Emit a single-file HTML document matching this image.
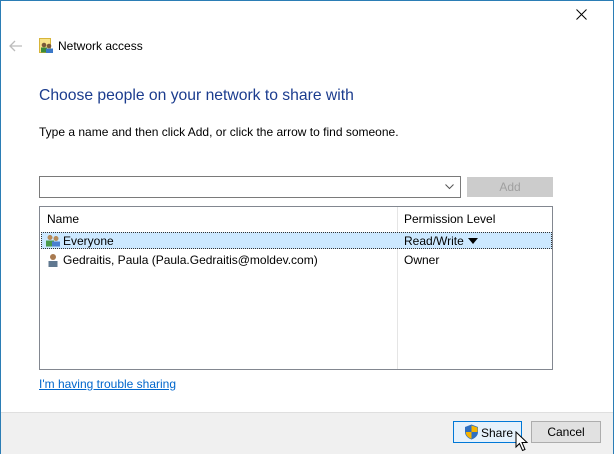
<!DOCTYPE html><html><head><style>
body{margin:0;width:614px;height:454px;overflow:hidden;font-family:"Liberation Sans",sans-serif;font-size:12px;color:#000;background:#fff}
.win{position:absolute;left:0;top:0;width:612px;height:452px;border:1px solid #2b7db5;background:#fff}
.a{position:absolute;white-space:nowrap}
.foot{position:absolute;left:0;top:411px;width:612px;height:41px;background:#f0f0f0;border-top:1px solid #dfdfdf}
.btn{position:absolute;height:20px;border:1px solid #adadad;background:#e1e1e1;text-align:center;line-height:20px;box-sizing:content-box}
</style></head><body><div class="win">
<svg class="a" style="left:575px;top:8px" width="11" height="11"><path d="M0.5 0.5L10.5 10.5M10.5 0.5L0.5 10.5" stroke="#000" stroke-width="1"/></svg>
<svg class="a" style="left:8px;top:39px" width="14" height="12"><path d="M1 6H13M6 1L1 6L6 11" stroke="#bcbcbc" stroke-width="1.3" fill="none"/></svg>
<svg class="a" style="left:38px;top:37px" width="15" height="15"><rect x="0.5" y="0.5" width="11" height="14" fill="#f7e38a" stroke="#d7b53a"/><circle cx="5" cy="7" r="2.3" fill="#7a5a3a"/><rect x="2" y="9.5" width="6" height="5" fill="#3a8a3a"/><circle cx="10" cy="8" r="2.3" fill="#7a5a3a"/><rect x="7" y="10.5" width="7" height="4.5" fill="#3a78c8"/></svg>
<div class="a" style="left:57px;top:38px;font-size:12px">Network access</div>
<div class="a" style="left:38px;top:86px;font-size:15.7px;color:#1b3c8e">Choose people on your network to share with</div>
<div class="a" style="left:38px;top:124px">Type a name and then click Add, or click the arrow to find someone.</div>
<div class="a" style="left:38px;top:175px;width:420px;height:20px;border:1px solid #7a7a7a"></div>
<svg class="a" style="left:444px;top:183px" width="9" height="6"><path d="M0.5 0.5L4.5 4.5L8.5 0.5" stroke="#555" fill="none"/></svg>
<div class="btn" style="left:466px;top:176px;width:84px;height:18px;line-height:18px;background:#cccccc;border-color:#cccccc;color:#a0a0a0">Add</div>
<div class="a" style="left:38px;top:205px;width:512px;height:162px;border:1px solid #828790"></div>
<div class="a" style="left:396px;top:206px;width:1px;height:162px;background:#e5e5e5"></div>
<div class="a" style="left:46px;top:211px">Name</div>
<div class="a" style="left:403px;top:211px">Permission Level</div>
<div class="a" style="left:40px;top:231px;width:509px;height:15px;background:#cce8ff;border:1px dotted #333"></div>
<svg class="a" style="left:44px;top:233px" width="16" height="13"><circle cx="5" cy="3.5" r="2.5" fill="#b58a5a"/><rect x="1" y="6.5" width="8" height="6" fill="#4a9a4a"/><circle cx="11" cy="4.5" r="2.5" fill="#b58a5a"/><rect x="7" y="7.5" width="8" height="5" fill="#4a7fd0"/></svg>
<div class="a" style="left:62px;top:233px">Everyone</div>
<div class="a" style="left:403px;top:233px">Read/Write</div>
<svg class="a" style="left:467px;top:237px" width="10" height="6"><path d="M0 0H10L5 6Z" fill="#000"/></svg>
<svg class="a" style="left:46px;top:252px" width="12" height="14"><circle cx="6" cy="4" r="3" fill="#a87a50"/><rect x="1.5" y="8" width="9" height="6" fill="#607890"/></svg>
<div class="a" style="left:62px;top:252px">Gedraitis, Paula (Paula.Gedraitis@moldev.com)</div>
<div class="a" style="left:403px;top:252px">Owner</div>
<div class="a" style="left:38px;top:376px;color:#0066cc;text-decoration:underline">I'm having trouble sharing</div>
<div class="foot"></div>
<div class="btn" style="left:452px;top:420px;width:67px;background:#e5f1fb;border-color:#0078d7"></div>
<svg class="a" style="left:463px;top:423px" width="15" height="16"><path d="M7.5 0.5L14 3V8C14 12 10.5 14.5 7.5 15.5C4.5 14.5 1 12 1 8V3Z" fill="#2f6fc0"/><path d="M7.5 1.5V8H13.5V3.5ZM7.5 8V14.8C4.5 13.8 1.8 11.5 1.8 8Z" fill="#f6b400"/></svg>
<div class="a" style="left:480px;top:425px">Share</div>
<svg class="a" style="left:514px;top:430px" width="14" height="22"><path d="M1 1V16L4.5 12.5L7.5 19.5L10 18.5L7 11.5H12Z" fill="#fff" stroke="#000" stroke-width="1"/></svg>
<div class="btn" style="left:530px;top:420px;width:68px">Cancel</div>
</div></body></html>
